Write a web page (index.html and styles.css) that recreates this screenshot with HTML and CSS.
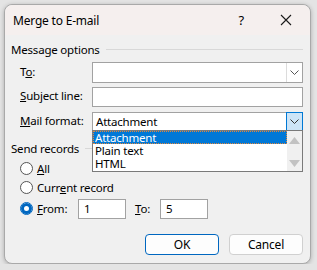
FILE: index.html
```html
<!DOCTYPE html>
<html>
<head>
    <title>Merge to E-mail</title>
    <link rel="stylesheet" href="styles.css">
</head>
<body>
    <div class="window">
        <div class="titlebar">
            <span class="title">Merge to E-mail</span>
            <span class="help">?</span>
            <svg class="close" width="12" height="12" viewBox="0 0 12 12">
                <path d="M1 1 L11 11 M11 1 L1 11" stroke="#1a1a1a" stroke-width="1.1" fill="none"/>
            </svg>
        </div>

        <div class="content">
            <div class="group-head">
                <span>Message options</span>
                <div class="rule"></div>
            </div>

            <div class="row row-to">
                <label class="lbl">T<u>o</u>:</label>
                <div class="combo">
                    <div class="combo-text"></div>
                    <div class="combo-btn">
                        <svg width="9" height="5" viewBox="0 0 9 5"><path d="M0.5 0.5 L4.5 4.5 L8.5 0.5" stroke="#555" fill="none"/></svg>
                    </div>
                </div>
            </div>

            <div class="row row-subject">
                <label class="lbl"><u>S</u>ubject line:</label>
                <div class="textbox"></div>
            </div>

            <div class="row row-format">
                <label class="lbl"><u>M</u>ail format:</label>
                <div class="select">
                    <div class="select-text">Attachment</div>
                    <div class="select-btn">
                        <svg width="9" height="5" viewBox="0 0 9 5"><path d="M0.5 0.5 L4.5 4.5 L8.5 0.5" stroke="#333" fill="none"/></svg>
                    </div>
                    <div class="droplist">
                        <ul class="options">
                            <li class="selected">Attachment</li>
                            <li>Plain text</li>
                            <li>HTML</li>
                        </ul>
                        <div class="scroll">
                            <svg width="11" height="7" viewBox="0 0 11 7"><path d="M5.5 0 L11 7 L0 7 Z" fill="#c2c2c2"/></svg>
                            <svg width="11" height="7" viewBox="0 0 11 7"><path d="M0 0 L11 0 L5.5 7 Z" fill="#c2c2c2"/></svg>
                        </div>
                    </div>
                </div>
            </div>

            <div class="group-head send-head">
                <span>Send records</span>
                <div class="rule"></div>
            </div>

            <div class="radios">
                <div class="radio"><span class="dot"></span><span><u>A</u>ll</span></div>
                <div class="radio"><span class="dot"></span><span>Curr<u>e</u>nt record</span></div>
                <div class="radio radio-range">
                    <span class="dot checked"></span>
                    <span class="from-lbl"><u>F</u>rom:</span>
                    <div class="numbox">1</div>
                    <span class="to-lbl"><u>T</u>o:</span>
                    <div class="numbox">5</div>
                </div>
            </div>

            <div class="buttons">
                <button class="btn default">OK</button>
                <button class="btn">Cancel</button>
            </div>
        </div>
    </div>
</body>
</html>
```
FILE: styles.css
```css
body {
    margin: 0;
    padding: 0;
    background: #e4e4e4;
    font-family: "Segoe UI", "Noto Sans", Arial, sans-serif;
    font-size: 11.5px;
    letter-spacing: -0.2px;
    color: #000;
}

.window {
    margin: 4px 0 0 4px;
    width: 305px;
    height: 258px;
    border: 1px solid #a9a9a9;
    border-radius: 8px;
    background: #f0f0f0;
    box-shadow: 0 1px 4px rgba(0, 0, 0, 0.25);
}

.titlebar {
    height: 30px;
    display: flex;
    align-items: center;
    background: #f5efee;
    border-radius: 8px 8px 0 0;
    padding-left: 8px;
}

.title {
    flex: 1;
    font-size: 12px;
}

.help {
    font-size: 13px;
    margin-right: 36px;
}

.close {
    margin-right: 18px;
}

.content {
    padding: 6px 7px 0 6px;
}

.group-head {
    display: flex;
    align-items: center;
    height: 16px;
}

.group-head .rule {
    flex: 1;
    height: 1px;
    background: #d8d8d8;
    margin-left: 6px;
}

.row {
    display: flex;
    align-items: center;
}

.lbl {
    flex: none;
    width: 81px;
    padding-left: 9px;
    box-sizing: border-box;
    margin-top: -3px;
}

.row-to {
    margin-top: 5px;
}

.row-subject {
    margin-top: 4px;
}

.row-format {
    margin-top: 5px;
}

.combo {
    flex: 1;
    height: 21px;
    display: flex;
    background: #fff;
    border: 1px solid #a2a2a2;
    box-sizing: border-box;
}

.combo-text {
    flex: 1;
}

.combo-btn {
    width: 15px;
    border-left: 1px solid #dcdcdc;
    display: flex;
    align-items: center;
    justify-content: center;
}

.textbox {
    flex: 1;
    height: 20px;
    background: #fff;
    border: 1px solid #a2a2a2;
    box-sizing: border-box;
}

.select {
    flex: 1;
    height: 19px;
    display: flex;
    position: relative;
    background: #fff;
    border: 1px solid #a2a2a2;
    box-sizing: border-box;
}

.select-text {
    flex: 1;
    padding-left: 3px;
    line-height: 17px;
}

.select-btn {
    width: 15px;
    margin: -1px -1px -1px 0;
    border: 1px solid #0078d4;
    background: #cce4f7;
    display: flex;
    align-items: center;
    justify-content: center;
}

.droplist {
    position: absolute;
    left: -1px;
    right: -1px;
    top: 17px;
    height: 42px;
    border: 1px solid #7a7a7a;
    background: #fff;
    display: flex;
    box-sizing: border-box;
    z-index: 2;
}

.options {
    list-style-type: none;
    margin: 0;
    padding: 0;
    flex: 1;
}

.options li {
    height: 13px;
    line-height: 13px;
    padding-left: 2px;
}

.options li.selected {
    background: #0078d7;
    color: #fff;
    outline: 1px dotted #e3873a;
    outline-offset: -1px;
}

.scroll {
    width: 15px;
    background: #f0f0f0;
    display: flex;
    flex-direction: column;
    align-items: center;
    justify-content: space-between;
    padding: 6px 0 4px;
    box-sizing: border-box;
}

.send-head {
    margin-top: 9px;
}

.radios {
    margin-top: 3px;
    padding-left: 9px;
}

.radio {
    display: flex;
    align-items: center;
    height: 19px;
}

.dot {
    flex: none;
    width: 11px;
    height: 11px;
    border: 1px solid #555;
    border-radius: 50%;
    background: #fff;
    margin-right: 4px;
}

.dot.checked {
    border-color: #0067c0;
    box-shadow: inset 0 0 0 3px #0067c0;
}

.radio-range {
    height: 21px;
    margin-top: 1px;
}

.from-lbl {
    flex: none;
    width: 41px;
}

.numbox {
    flex: none;
    width: 48px;
    height: 20px;
    box-sizing: border-box;
    border: 1px solid #a2a2a2;
    background: #fff;
    padding-left: 5px;
    line-height: 18px;
}

.to-lbl {
    flex: none;
    margin-left: 9px;
    width: 25px;
}

.buttons {
    display: flex;
    justify-content: flex-end;
    gap: 10px;
    margin-top: 15px;
}

.btn {
    width: 74px;
    height: 21px;
    font-family: inherit;
    font-size: 12px;
    letter-spacing: -0.2px;
    background: #fdfdfd;
    border: 1px solid #d0d0d0;
    border-radius: 4px;
    padding: 0;
}

.btn.default {
    border: 1px solid #0067c0;
}
```
